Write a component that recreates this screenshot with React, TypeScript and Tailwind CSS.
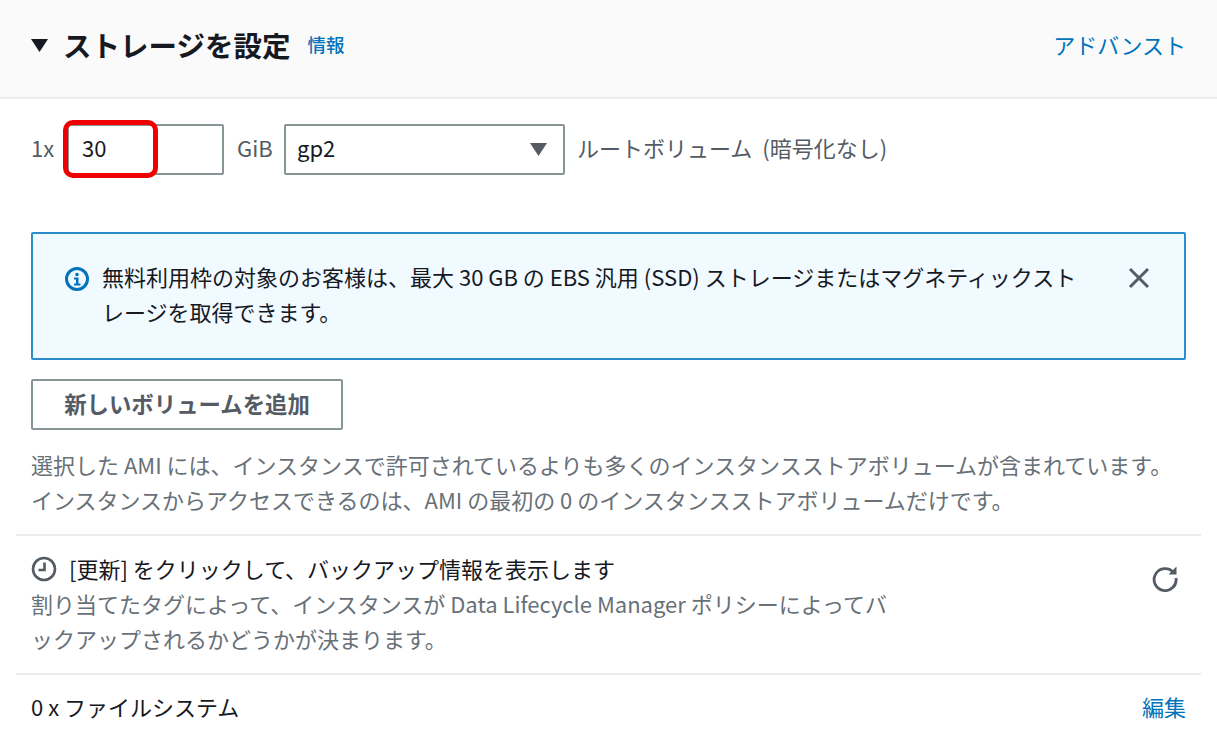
import React from "react";

const FONT = "font-['Noto_Sans_CJK_JP',sans-serif]";

const StorageHeader = () => (
  <div className="h-[99px] bg-[#fafafa] border-b-2 border-[#eaeded] pl-[31px] pr-[31px] pb-[8px] flex items-center justify-between">
    <div className="flex items-center">
      <svg width="17" height="14" viewBox="0 0 17 14" className="mr-[15px]">
        <path d="M0 1h17L8.5 14z" fill="#16191f" />
      </svg>
      <h2 className="text-[28.5px] leading-[36px] font-bold text-[#16191f]">ストレージを設定</h2>
      <a className="ml-[17px] text-[18.5px] font-medium text-[#0073bb]">情報</a>
    </div>
    <a className="text-[22px] text-[#0073bb]">アドバンスト</a>
  </div>
);

const VolumeRow = () => (
  <div className="relative flex items-center h-[51px] mt-[25px] px-[31px] text-[22px] text-[#545b64]">
    <span className="w-[36px] pb-[5px]">1x</span>
    <div className="w-[157px] h-[51px] border-2 border-[#879596] rounded-[2px] pl-[13px] pb-[5px] flex items-center text-[#16191f]">30</div>
    <span className="ml-[13px] w-[47px] pb-[5px]">GiB</span>
    <div className="w-[281px] h-[51px] border-2 border-[#879596] rounded-[2px] pl-[11px] pr-[16px] flex items-center justify-between text-[#16191f]">
      <span className="pb-[5px]">gp2</span>
      <svg width="17" height="13" viewBox="0 0 17 13">
        <path d="M0 0h17L8.5 13z" fill="#545b64" />
      </svg>
    </div>
    <span className="ml-[12px] pb-[5px]">ルートボリューム&nbsp;&nbsp;(暗号化なし)</span>
    {/* annotation drawn over the input */}
    <div className="absolute left-[63px] top-[-4px] w-[95px] h-[58px] border-[5px] border-[#f00000] rounded-[10px]" />
  </div>
);

const FreeTierAlert = () => (
  <div className="mt-[57px] mx-[31px] h-[128px] border-2 border-[#2b8dcb] rounded-[2px] bg-[#f1faff] flex pl-[31px] pr-[33px] pt-[25px]">
    <svg width="26" height="26" viewBox="0 0 26 26" className="mt-[7px] shrink-0">
      <circle cx="13" cy="13" r="10.5" fill="none" stroke="#0073bb" strokeWidth="3" />
      <circle cx="13" cy="8.5" r="1.8" fill="#0073bb" />
      <path d="M10 11.5h4.5v6H16.5v2h-6.5v-2h2v-4H10z" fill="#0073bb" />
    </svg>
    <p className="ml-[12px] w-[990px] text-[22px] leading-[35px] text-[#16191f]">
      無料利用枠の対象のお客様は、最大 30 GB の EBS 汎用 (SSD) ストレージまたはマグネティックストレージを取得できます。
    </p>
    <svg width="24" height="24" viewBox="0 0 24 24" className="ml-auto mt-[7px] shrink-0">
      <path d="M3 3l18 18M21 3L3 21" stroke="#545b64" strokeWidth="3" fill="none" />
    </svg>
  </div>
);

const Divider = () => <div className="mx-[16px] h-[2px] bg-[#eaeded]" />;

const App = () => (
  <div className={`${FONT} w-[1217px] h-[756px] bg-white overflow-hidden`}>
    <StorageHeader />
    <VolumeRow />
    <FreeTierAlert />
    <button className="ml-[31px] mt-[19px] block w-[312px] h-[51px] border-2 border-[#879596] rounded-[2px] bg-white pb-[2px] text-[22.4px] font-bold text-[#545b64]">
      新しいボリュームを追加
    </button>
    <p className="mt-[17px] px-[31px] text-[22px] leading-[34.5px] text-[#687078]">
      選択した AMI には、インスタンスで許可されているよりも多くのインスタンスストアボリュームが含まれています。
      <br />
      インスタンスからアクセスできるのは、AMI の最初の 0 のインスタンスストアボリュームだけです。
    </p>
    <div className="mt-[18px]">
      <Divider />
    </div>
    <div className="relative px-[31px] pt-[15px] h-[137px]">
      <div className="flex items-center text-[22px] leading-[35px] text-[#16191f]">
        <svg width="26" height="26" viewBox="0 0 26 26" className="mr-[12px] shrink-0">
          <circle cx="13" cy="13" r="11" fill="none" stroke="#545b64" strokeWidth="2.6" />
          <path d="M13.5 6.5v7.5H7.5" fill="none" stroke="#545b64" strokeWidth="2.6" />
        </svg>
        [更新] をクリックして、バックアップ情報を表示します
      </div>
      <p className="w-[865px] text-[22px] leading-[35px] text-[#687078]">
        割り当てたタグによって、インスタンスが Data Lifecycle Manager ポリシーによってバックアップされるかどうかが決まります。
      </p>
      <svg width="28" height="28" viewBox="0 0 28 28" className="absolute right-[38px] top-[28px]">
        <path d="M22.5 8.5A11 11 0 1 0 25 14" fill="none" stroke="#545b64" strokeWidth="2.8" />
        <path d="M25.5 2.5v8h-8z" fill="#545b64" />
      </svg>
    </div>
    <Divider />
    <div className="px-[31px] mt-[13px] flex items-center justify-between text-[22px] leading-[36px] text-[#16191f]">
      <span>0 x ファイルシステム</span>
      <a className="text-[#0073bb]">編集</a>
    </div>
  </div>
);

export default App;
